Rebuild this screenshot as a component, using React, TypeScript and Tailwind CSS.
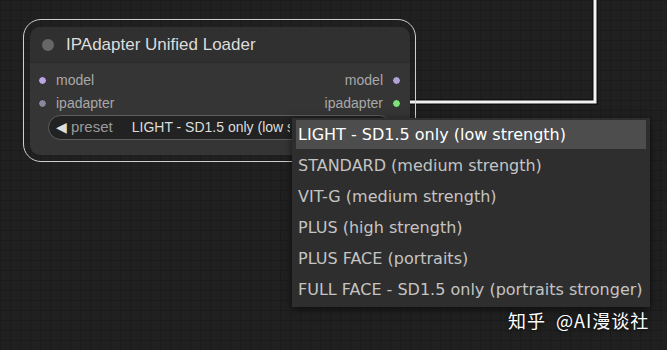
import React from "react";

const presets = [
    "LIGHT - SD1.5 only (low strength)",
    "STANDARD (medium strength)",
    "VIT-G (medium strength)",
    "PLUS (high strength)",
    "PLUS FACE (portraits)",
    "FULL FACE - SD1.5 only (portraits stronger)",
];

function Slot({ label, color, right }: { label: string; color: string; right?: boolean }) {
    return (
        <div className={`flex items-center h-[23px] gap-[9px] ${right ? "flex-row-reverse" : ""}`}>
            <span className="w-[9px] h-[9px] rounded-full border border-[#222]" style={{ backgroundColor: color }} />
            <span className="text-[14px] text-[#a8a8a8]">{label}</span>
        </div>
    );
}

export default function App() {
    return (
        <div
            className="relative w-[667px] h-[350px] overflow-hidden bg-[#202020] [background-image:linear-gradient(#1b1b1b_1px,transparent_1px),linear-gradient(90deg,#1b1b1b_1px,transparent_1px)] [background-size:10px_10px]"
            style={{ fontFamily: '"Liberation Sans", Arial, sans-serif' }}
        >
            {/* 연결선 */}
            <svg className="absolute inset-0" width="667" height="350">
                <path d="M403 102 H595 V0" fill="none" stroke="#111" strokeWidth="6" />
                <path d="M403 102 H595 V0" fill="none" stroke="#f2f2f2" strokeWidth="3" />
            </svg>

            {/* 선택 외곽선 */}
            <div className="absolute left-[23px] top-[19px] w-[393px] h-[143px] rounded-[18px] border-[1.5px] border-[#cfcfcf]" />

            {/* 노드 */}
            <div className="absolute left-[30px] top-[27px] w-[380px] h-[128px] rounded-[10px] bg-[#353535] overflow-hidden">
                <div className="flex items-center h-[36px] bg-[#303030] border-b border-[#2a2a2a]">
                    <span className="ml-[12px] w-[12px] h-[12px] rounded-full bg-[#666]" />
                    <span className="ml-[12px] text-[17px] text-[#dcdcdc]">IPAdapter Unified Loader</span>
                </div>
                <div className="flex justify-between pt-[6px] px-[8px]">
                    <div className="flex flex-col">
                        <Slot label="model" color="#b9a6e0" />
                        <Slot label="ipadapter" color="#8a879c" />
                    </div>
                    <div className="flex flex-col pr-[1px]">
                        <Slot label="model" color="#b2a3d6" right />
                        <Slot label="ipadapter" color="#7fe37a" right />
                    </div>
                </div>
                <div className="mx-[18px] h-[25px] rounded-full bg-[#222] border border-[#5e5e5e] flex items-center text-[14px] whitespace-nowrap overflow-hidden">
                    <span className="ml-[7px] text-[#ddd] text-[14px]">◀</span>
                    <span className="ml-[4px] text-[15px] text-[#9a9a9a]">preset</span>
                    {/* 드롭다운에 가려지는 부분은 잘라냄 */}
                    <span className="ml-[19px] w-[158px] overflow-hidden text-[#ddd] text-[14px]">LIGHT - SD1.5 only (low strength)</span>
                </div>
            </div>

            {/* 드롭다운 메뉴 */}
            <div
                className="absolute left-[292px] top-[118px] w-[358px] h-[189px] bg-[#2e2e2e] shadow-[0_2px_8px_rgba(0,0,0,0.6)] px-[4px] pt-[2px] flex flex-col gap-[2px]"
                style={{ fontFamily: '"DejaVu Sans", Verdana, sans-serif' }}
            >
                {presets.map((p, i) => (
                    <div
                        key={p}
                        className={`h-[29px] flex items-center pl-[2px] text-[16px] whitespace-nowrap ${i === 0 ? "bg-[#4d4d4d] text-white" : "text-[#c4c4c4]"}`}
                    >
                        {p}
                    </div>
                ))}
            </div>

            {/* 워터마크 */}
            <div
                className="absolute left-[508px] top-[307px] text-[18px] tracking-[1px] text-white [text-shadow:0_0_4px_rgba(0,0,0,0.9)]"
                style={{ fontFamily: '"Noto Sans CJK SC", "Liberation Sans", sans-serif' }}
            >
                知乎&nbsp; @AI漫谈社
            </div>
        </div>
    );
}
